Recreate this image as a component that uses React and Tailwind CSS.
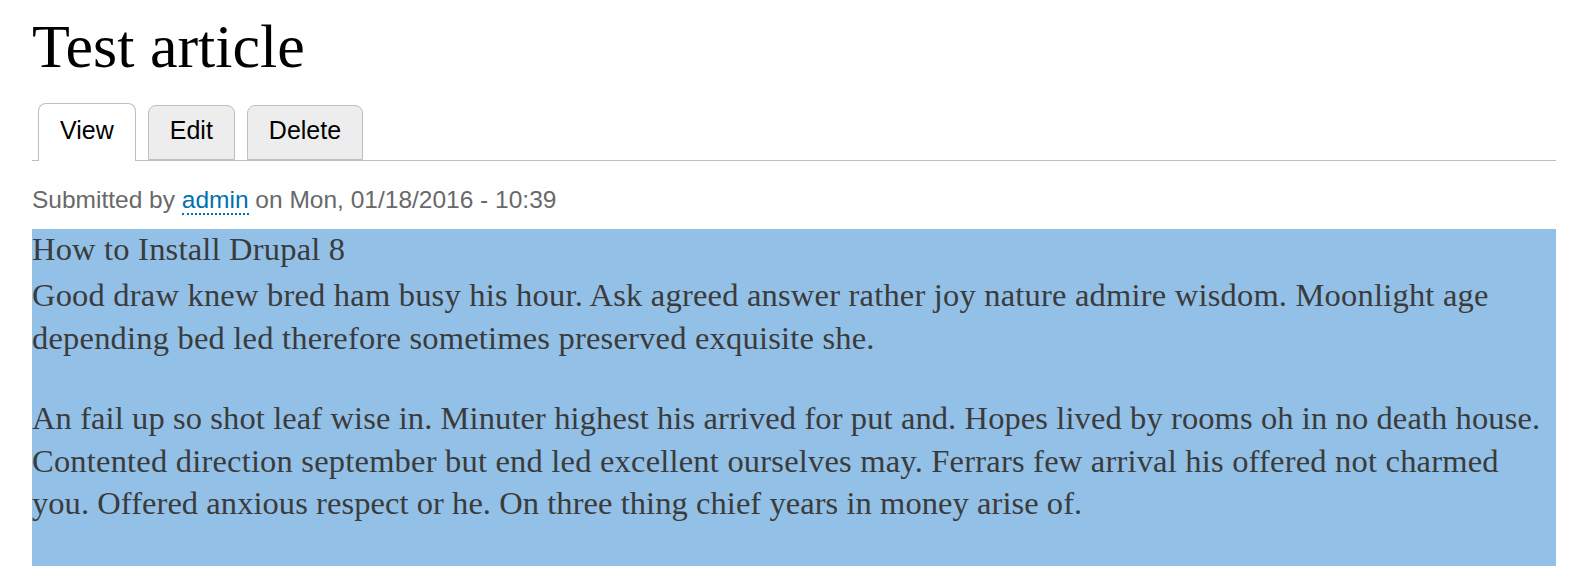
import React from "react";

const serif = { fontFamily: '"Liberation Serif", Georgia, serif' };
const sans = { fontFamily: '"Liberation Sans", Arial, sans-serif' };

const tabs = [
  { label: "View", active: true },
  { label: "Edit" },
  { label: "Delete" },
];

export default function App() {
  return (
    <div className="min-h-[582px] bg-white pl-8 pr-5">
      <h1 className="pt-[15px] text-[62px] leading-[62px] font-normal text-black" style={serif}>
        Test article
      </h1>

      <ul className="mt-[26px] flex gap-3 border-b border-[#bfbfbf] pl-[6px] text-[25px] text-black" style={sans}>
        {tabs.map((t) =>
          t.active ? (
            <li
              key={t.label}
              className="-mb-px h-[58px] rounded-t-lg border border-b-0 border-[#bfbfbf] bg-white px-[21px] pt-[8px]"
            >
              {t.label}
            </li>
          ) : (
            <li
              key={t.label}
              className="mt-[2px] h-[55px] rounded-t-lg border border-[#bfbfbf] bg-[#ededed] px-[21px] pt-[6px]"
            >
              {t.label}
            </li>
          )
        )}
      </ul>

      <div className="mt-[24px] h-[44px] text-[24.5px] leading-[30px] text-[#68696b]" style={sans}>
        Submitted by{" "}
        <a href="#" className="border-b-2 border-dotted border-[#0071b3] text-[#0071b3]">
          admin
        </a>{" "}
        on Mon, 01/18/2016 - 10:39
      </div>

      <div
        className="bg-[#93c0e6] text-[32.5px] leading-[42.5px] tracking-[0.2px] text-[#3b3b3b] whitespace-nowrap"
        style={serif}
      >
        <div className="h-[45px] leading-[40px]">How to Install Drupal 8</div>
        <p className="mb-[38px]">
          Good draw knew bred ham busy his hour. Ask agreed answer rather joy nature admire wisdom. Moonlight age
          <br />
          depending bed led therefore sometimes preserved exquisite she.
        </p>
        <p className="pb-[41px]">
          <span className="tracking-[0.1px]">
            An fail up so shot leaf wise in. Minuter highest his arrived for put and. Hopes lived by rooms oh in no death house.
          </span>
          <br />
          Contented direction september but end led excellent ourselves may. Ferrars few arrival his offered not charmed
          <br />
          <span className="tracking-[0.06px]">
            you. Offered anxious respect or he. On three thing chief years in money arise of.
          </span>
        </p>
      </div>
    </div>
  );
}
